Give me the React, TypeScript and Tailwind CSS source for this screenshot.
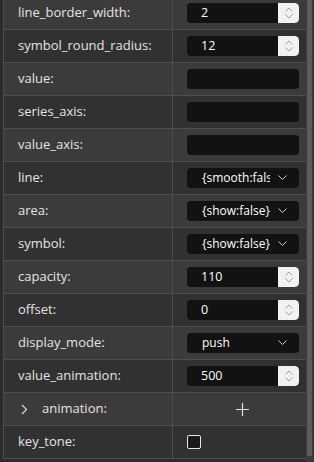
import React from "react";

type Row = {
  label: string;
  kind: "number" | "text" | "select" | "group" | "check";
  value?: string;
};

const rows: Row[] = [
  { label: "line_border_width:", kind: "number", value: "2" },
  { label: "symbol_round_radius:", kind: "number", value: "12" },
  { label: "value:", kind: "text" },
  { label: "series_axis:", kind: "text" },
  { label: "value_axis:", kind: "text" },
  { label: "line:", kind: "select", value: "{smooth:false}" },
  { label: "area:", kind: "select", value: "{show:false}" },
  { label: "symbol:", kind: "select", value: "{show:false}" },
  { label: "capacity:", kind: "number", value: "110" },
  { label: "offset:", kind: "number", value: "0" },
  { label: "display_mode:", kind: "select", value: "push" },
  { label: "value_animation:", kind: "number", value: "500" },
  { label: "animation:", kind: "group" },
  { label: "key_tone:", kind: "check" },
];

const Editor = ({ row }: { row: Row }) => {
  if (row.kind === "number") {
    return (
      <div className="flex h-5 w-[112px] items-center overflow-hidden rounded-[4px] bg-[#121212]">
        <span className="flex-1 pl-[14px] text-[12.5px] text-white">{row.value}</span>
        <div className="flex h-full w-[21px] flex-col items-center justify-center rounded-r-[4px] bg-[#f2f2f2]">
          <svg width="10" height="14" viewBox="0 0 10 14" fill="none">
            <path d="M1.5 5.5 L5 2 L8.5 5.5" stroke="#a0a0a0" strokeWidth="1" />
            <path d="M1.5 8.5 L5 12 L8.5 8.5" stroke="#a0a0a0" strokeWidth="1" />
          </svg>
        </div>
      </div>
    );
  }
  if (row.kind === "text") {
    return <div className="h-5 w-[112px] rounded-[4px] bg-[#121212]" />;
  }
  if (row.kind === "select") {
    return (
      <div className="flex h-5 w-[112px] items-center rounded-[4px] bg-[#121212] pl-[15px] pr-[12px]">
        <span className="w-[69px] overflow-hidden whitespace-nowrap text-[12px] text-white">{row.value}</span>
        <span className="ml-[8px] flex items-center">
          <svg width="9" height="6" viewBox="0 0 9 6" fill="none">
            <path d="M0.5 0.5 L4.5 4.5 L8.5 0.5" stroke="#d0d0d0" strokeWidth="1" />
          </svg>
        </span>
      </div>
    );
  }
  if (row.kind === "group") {
    return (
      <div className="flex w-full justify-center pr-[8px]">
        <svg width="13" height="13" viewBox="0 0 13 13" fill="none">
          <path d="M6.5 0 V13 M0 6.5 H13" stroke="#e0e0e0" strokeWidth="1.2" />
        </svg>
      </div>
    );
  }
  return <div className="h-[14px] w-[14px] rounded-[2px] border border-[#e8e8e8] bg-[#1a1a1a]" />;
};

export default function App() {
  return (
    <main
      className="flex h-[462px] w-[314px] overflow-hidden bg-[#2c2c2c]"
      style={{ fontFamily: "'Open Sans', 'Noto Sans', Arial, sans-serif" }}
    >
      <div className="flex w-[306px] flex-col pl-[3px]">
        <div className="-mt-[3px] flex flex-col border-l border-[#4e4e4e]">
          {rows.map((row, i) => (
            <div
              key={row.label}
              className={`flex h-[33px] shrink-0 border-b border-[#4e4e4e] ${i % 2 === 0 ? "bg-[#3b3b3b]" : "bg-[#313131]"}`}
            >
              <div className="flex w-[169px] items-center border-r border-[#4e4e4e] pl-[14px] text-[13px] text-[#e4e4e4]">
                {row.kind === "group" ? (
                  <>
                    <span className="ml-[3px] mr-[14px] flex items-center">
                      <svg width="7" height="11" viewBox="0 0 7 11" fill="none">
                        <path d="M1 1 L5.5 5.5 L1 10" stroke="#d8d8d8" strokeWidth="1.2" />
                      </svg>
                    </span>
                    <span>{row.label}</span>
                  </>
                ) : (
                  <span>{row.label}</span>
                )}
              </div>
              <div className="flex flex-1 items-center pl-[14px]">
                <Editor row={row} />
              </div>
            </div>
          ))}
        </div>
      </div>
      <div className="flex w-[8px] flex-col bg-[#3a3a3a]">
        <div className="ml-[1px] h-[456px] w-[5px] bg-[#5c5c5c]" />
      </div>
    </main>
  );
}
